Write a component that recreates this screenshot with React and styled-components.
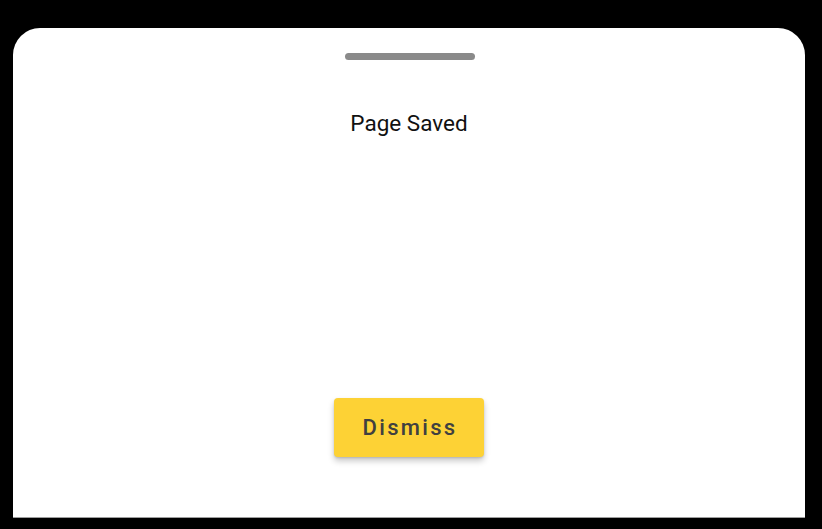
import React from 'react';
import styled, { createGlobalStyle } from 'styled-components';

const GlobalStyle = createGlobalStyle`
	html, body {
		margin: 0;
		padding: 0;
		background: #000;
		font-family: Roboto, 'Noto Sans', sans-serif;
	}
`;

const Screen = styled.div`
	width: 822px;
	height: 529px;
	box-sizing: border-box;
	padding: 28px 17px 11px 13px;
	display: flex;
`;

const Sheet = styled.div`
	flex: 1;
	display: flex;
	flex-direction: column;
	align-items: center;
	background: #fff;
	border-radius: 27px 27px 0 0;
	border-bottom: 1px solid #9e9e9e;
`;

const Handle = styled.div`
	width: 130px;
	height: 7px;
	margin-top: 25px;
	margin-left: 2px;
	border-radius: 4px;
	background: #8a8a8a;
`;

const Title = styled.div`
	margin-top: 50px;
	font-size: 22.5px;
	line-height: 27px;
	color: #111;
`;

const DismissButton = styled.button`
	margin-top: auto;
	margin-bottom: 60px;
	width: 150px;
	height: 59px;
	padding: 0 0 0 2px;
	border: none;
	border-radius: 4px;
	background: #fdd235;
	color: #404040;
	font-family: Roboto, sans-serif;
	font-weight: 500;
	font-size: 22px;
	letter-spacing: 2.3px;
	box-shadow: 0 4px 6px rgba(0, 0, 0, 0.22), 0 1px 2px rgba(0, 0, 0, 0.12);
	cursor: pointer;
`;

const App = () => (
	<>
		<GlobalStyle />
		<Screen>
			<Sheet>
				<Handle />
				<Title>Page Saved</Title>
				<DismissButton>Dismiss</DismissButton>
			</Sheet>
		</Screen>
	</>
);

export default App;
